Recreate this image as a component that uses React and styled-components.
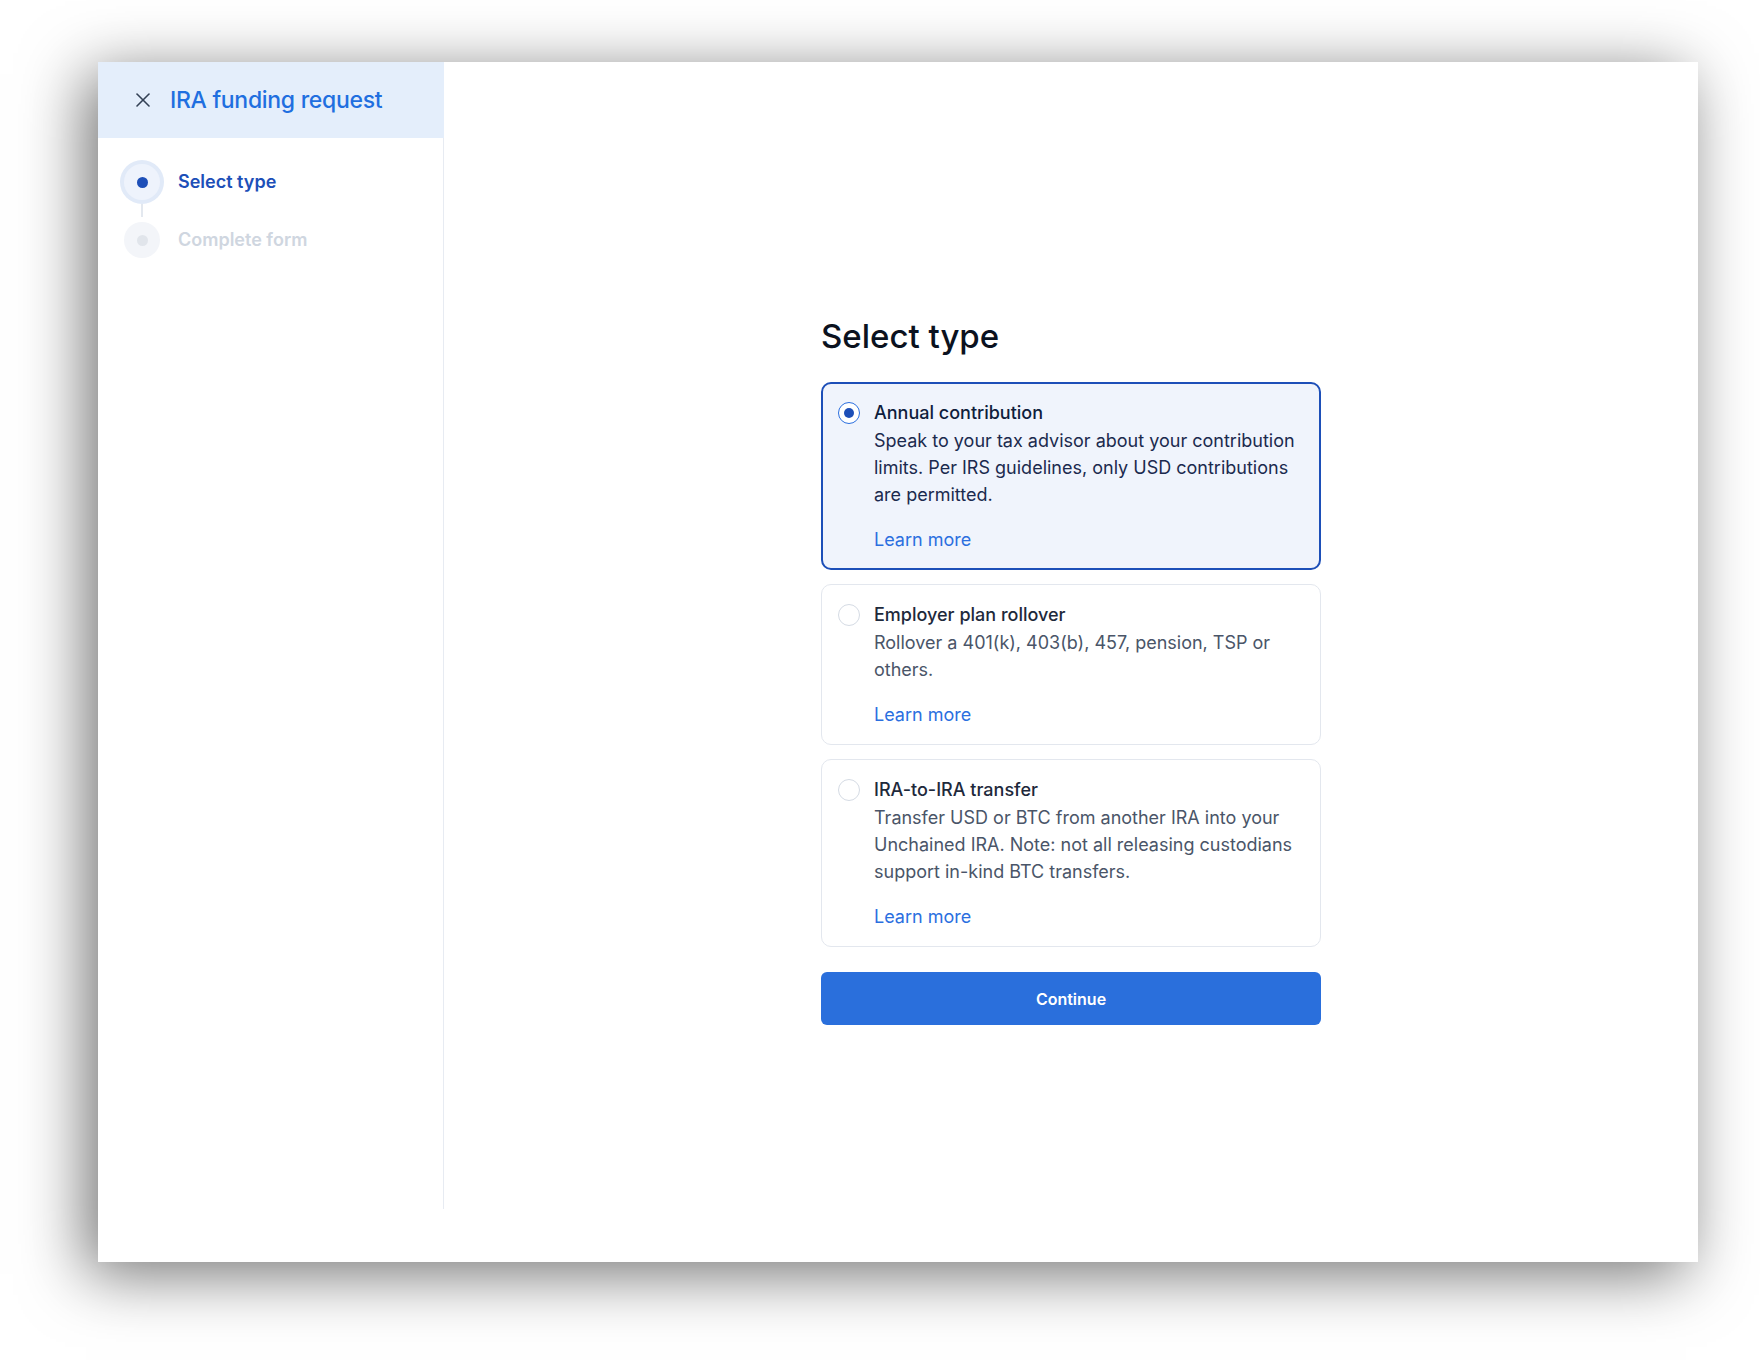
import React, { useState } from "react";
import styled, { createGlobalStyle, css } from "styled-components";

const Global = createGlobalStyle`
  html, body { margin: 0; padding: 0; background: #ffffff; }
  body { font-family: Inter, "Noto Sans", "Liberation Sans", sans-serif; -webkit-font-smoothing: antialiased; }
  * { box-sizing: border-box; }
`;

const Page = styled.div`
  width: 1760px;
  height: 1360px;
  padding: 62px 62px 98px 98px;
  background: #ffffff;
`;

const Frame = styled.div`
  width: 1600px;
  height: 1200px;
  background: #ffffff;
  display: flex;
  box-shadow: -12px 12px 60px rgba(0, 0, 0, 0.55);
`;

const Sidebar = styled.aside`
  width: 346px;
  flex: none;
  margin-bottom: 53px;
  border-right: 1px solid #e7ebf2;
  display: flex;
  flex-direction: column;
`;

const Header = styled.div`
  height: 76px;
  background: #e4eefb;
  display: flex;
  align-items: center;
  gap: 15px;
  padding-left: 33px;
  margin-right: -1px;
`;

const CloseButton = styled.button`
  width: 24px;
  height: 24px;
  padding: 0;
  border: 0;
  background: transparent;
  color: #334155;
  display: flex;
  align-items: center;
  justify-content: center;
  cursor: pointer;
`;

const HeaderTitle = styled.h1`
  margin: 0;
  font-size: 23px;
  line-height: 32px;
  font-weight: 500;
  color: #1f6fe0;
  letter-spacing: -0.3px;
`;

const Steps = styled.ol`
  list-style: none;
  margin: 0;
  padding: 26px 0 0 26px;
`;

const Step = styled.li`
  display: flex;
  align-items: center;
  gap: 18px;
`;

const StepDot = styled.span`
  width: 36px;
  height: 36px;
  border-radius: 50%;
  flex: none;
  display: flex;
  align-items: center;
  justify-content: center;
  background: ${(p) => (p.$active ? "#eef3fc" : "#f3f5f9")};
  box-shadow: ${(p) => (p.$active ? "0 0 0 4px #e1eaf8" : "none")};
  &::after {
    content: "";
    width: 11px;
    height: 11px;
    border-radius: 50%;
    background: ${(p) => (p.$active ? "#1d4fb8" : "#e1e5eb")};
  }
`;

const StepLabel = styled.span`
  font-size: 18px;
  line-height: 24px;
  font-weight: 600;
  color: ${(p) => (p.$active ? "#1d4fb8" : "#cfd6e0")};
`;

const Connector = styled.div`
  width: 2px;
  height: 22px;
  margin-left: 17px;
  padding: 4px 0 5px;
  &::before {
    content: "";
    display: block;
    height: 100%;
    background: #e3e8ef;
  }
`;

const Main = styled.main`
  flex: 1;
  padding-top: 254px;
`;

const Column = styled.div`
  width: 500px;
  margin: 0 auto;
  display: flex;
  flex-direction: column;
`;

const Heading = styled.h2`
  margin: 0 0 26px;
  font-size: 33px;
  line-height: 40px;
  font-weight: 500;
  color: #0b1220;
`;

const Options = styled.div`
  display: flex;
  flex-direction: column;
  gap: 14px;
`;

const OptionCard = styled.label`
  display: flex;
  gap: 14px;
  border-radius: 10px;
  cursor: pointer;
  ${(p) =>
    p.$selected
      ? css`
          border: 2px solid #1d4fb8;
          background: #f0f4fc;
          padding: 15px;
        `
      : css`
          border: 1px solid #e3e7ee;
          background: #ffffff;
          padding: 16px;
        `}
`;

const Radio = styled.span`
  width: 22px;
  height: 22px;
  margin-top: 3px;
  border-radius: 50%;
  flex: none;
  display: flex;
  align-items: center;
  justify-content: center;
  background: #ffffff;
  border: 1.5px solid ${(p) => (p.$checked ? "#2b6fdf" : "#d5dbe4")};
  &::after {
    content: "";
    width: 10px;
    height: 10px;
    border-radius: 50%;
    background: #1d4fb8;
    display: ${(p) => (p.$checked ? "block" : "none")};
  }
`;

const OptionBody = styled.div`
  display: flex;
  flex-direction: column;
`;

const OptionTitle = styled.div`
  font-size: 18px;
  line-height: 28px;
  font-weight: 500;
  color: ${(p) => (p.$selected ? "#0f1e3d" : "#1e293b")};
`;

const OptionText = styled.p`
  margin: 0;
  font-size: 18px;
  line-height: 27px;
  font-weight: 400;
  color: ${(p) => (p.$selected ? "#1b2a4e" : "#4a5568")};
`;

const LearnMore = styled.a`
  margin-top: 18px;
  font-size: 18px;
  line-height: 27px;
  color: #2b6fdf;
  text-decoration: none;
  align-self: flex-start;
`;

const ContinueButton = styled.button`
  margin-top: 25px;
  height: 53px;
  border: 0;
  border-radius: 6px;
  background: #2a6fdc;
  color: #ffffff;
  font-family: inherit;
  font-size: 16px;
  font-weight: 600;
  cursor: pointer;
`;

const CloseIcon = () => (
  <svg width="24" height="24" viewBox="0 0 24 24" fill="none" stroke="currentColor" strokeWidth="1.6" strokeLinecap="round">
    <path d="M18 6 6 18" />
    <path d="m6 6 12 12" />
  </svg>
);

const options = [
  {
    id: "annual",
    title: "Annual contribution",
    text: "Speak to your tax advisor about your contribution limits. Per IRS guidelines, only USD contributions are permitted.",
  },
  {
    id: "rollover",
    title: "Employer plan rollover",
    text: "Rollover a 401(k), 403(b), 457, pension, TSP or others.",
  },
  {
    id: "transfer",
    title: "IRA-to-IRA transfer",
    text: "Transfer USD or BTC from another IRA into your Unchained IRA. Note: not all releasing custodians support in-kind BTC transfers.",
  },
];

export default function App() {
  const [selected, setSelected] = useState("annual");
  return (
    <>
      <Global />
      <Page>
        <Frame>
          <Sidebar>
            <Header>
              <CloseButton aria-label="Close">
                <CloseIcon />
              </CloseButton>
              <HeaderTitle>IRA funding request</HeaderTitle>
            </Header>
            <Steps>
              <Step>
                <StepDot $active />
                <StepLabel $active>Select type</StepLabel>
              </Step>
              <Connector />
              <Step>
                <StepDot />
                <StepLabel>Complete form</StepLabel>
              </Step>
            </Steps>
          </Sidebar>
          <Main>
            <Column>
              <Heading>Select type</Heading>
              <Options>
                {options.map((o) => {
                  const isSel = o.id === selected;
                  return (
                    <OptionCard key={o.id} $selected={isSel} onClick={() => setSelected(o.id)}>
                      <Radio $checked={isSel} />
                      <OptionBody>
                        <OptionTitle $selected={isSel}>{o.title}</OptionTitle>
                        <OptionText $selected={isSel}>{o.text}</OptionText>
                        <LearnMore href="#" onClick={(e) => e.preventDefault()}>
                          Learn more
                        </LearnMore>
                      </OptionBody>
                    </OptionCard>
                  );
                })}
              </Options>
              <ContinueButton>Continue</ContinueButton>
            </Column>
          </Main>
        </Frame>
      </Page>
    </>
  );
}
